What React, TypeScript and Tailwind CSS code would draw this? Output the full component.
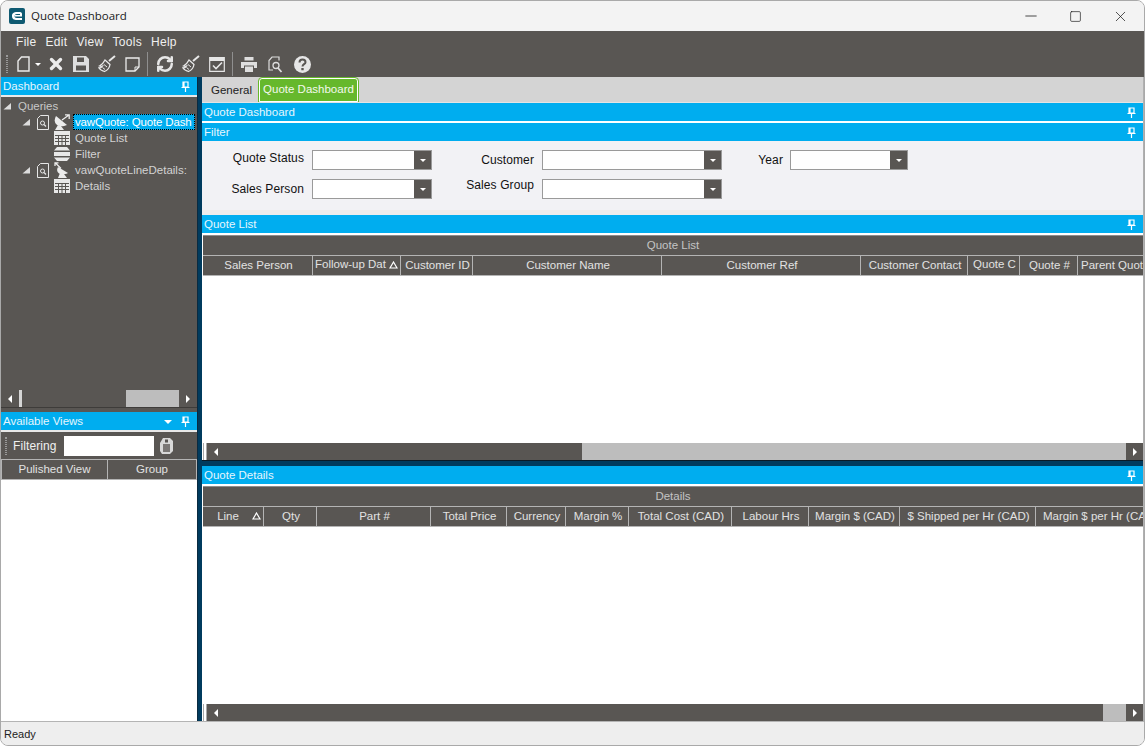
import { Minus, RefreshCw, Square, X } from "lucide-react";

const font = "[font-family:'Liberation_Sans',Arial,sans-serif]";

const quoteCols = [
  { label: "Sales Person", w: 110 },
  { label: "Follow-up Dat", w: 88, sort: true, up: true },
  { label: "Customer ID", w: 72 },
  { label: "Customer Name", w: 189 },
  { label: "Customer Ref", w: 199 },
  { label: "Customer Contact", w: 107 },
  { label: "Quote C", w: 52, up: true },
  { label: "Quote #", w: 58 },
  { label: "Parent Quot", w: 65, left: "pl-[3px]" },
];

const detailCols = [
  { label: "Line", w: 61, sort: true },
  { label: "Qty", w: 53 },
  { label: "Part #", w: 114 },
  { label: "Total Price", w: 76 },
  { label: "Currency", w: 59 },
  { label: "Margin %", w: 63 },
  { label: "Total Cost (CAD)", w: 103 },
  { label: "Labour Hrs", w: 77 },
  { label: "Margin $ (CAD)", w: 91 },
  { label: "$ Shipped per Hr (CAD)", w: 136 },
  { label: "Margin $ per Hr (CAD)", w: 108, left: "pl-[7px]" },
];

function Pin() {
  return (
    <svg width="9" height="11" viewBox="0 0 9 11" className="shrink-0">
      <path d="M2 1h5v5H2z M3 1v5" fill="none" stroke="#fff" strokeWidth="1.2" />
      <path d="M0.5 6.5h8M4.5 7v4" stroke="#fff" strokeWidth="1.2" />
    </svg>
  );
}

function BlueHeader({ title, dropdown }: { title: string; dropdown?: boolean }) {
  return (
    <div className="flex h-[18px] shrink-0 items-center bg-[#00adef] pl-[2px] pr-[7px] text-[11.5px] text-[#e6f6fd]">
      <span className="flex-1 truncate pt-px">{title}</span>
      {dropdown && <span className="mr-[9px] mt-[2px] h-0 w-0 border-x-[4px] border-t-[4px] border-x-transparent border-t-white" />}
      <Pin />
    </div>
  );
}

function LeftArrow() {
  return <span className="h-0 w-0 border-y-[4px] border-r-[4px] border-y-transparent border-r-white" />;
}

function RightArrow() {
  return <span className="h-0 w-0 border-y-[4px] border-l-[4px] border-y-transparent border-l-white" />;
}

function Combo({ width }: { width: string }) {
  return (
    <div className={`flex h-[20px] border border-[#9a9a9a] bg-white ${width}`}>
      <div className="flex-1" />
      <div className="flex w-[17px] items-center justify-center bg-[#595653]">
        <span className="h-0 w-0 border-x-[3px] border-t-[3px] border-x-transparent border-t-white" />
      </div>
    </div>
  );
}

function HeaderRow({ cols }: { cols: { label: string; w: number; sort?: boolean; up?: boolean; left?: string }[] }) {
  return (
    <div className="ml-px flex h-[21px] shrink-0 overflow-hidden border-y border-[#b4b4b4] bg-[#595653] text-[11.5px] text-[#e2e2e2]">
      {cols.map((c, i) => (
        <div
          key={c.label}
          style={{ width: c.w }}
          className={`relative flex shrink-0 whitespace-nowrap ${c.left ? c.left : "pl-[2px]"} ${i < cols.length - 1 ? "border-r border-[#b4b4b4]" : ""} ${c.left ? "justify-start" : c.sort && !c.up ? "justify-center pr-[12px]" : c.sort ? "justify-start" : "justify-center"} ${c.up ? "items-start leading-[17px]" : "items-center pt-px"}`}
        >
          {c.label}
          {c.sort && (
            <svg width="9" height="8" viewBox="0 0 9 8" className="absolute right-[2px] top-[5px]">
              <path d="M4.5 1 8 7H1z" fill="none" stroke="#fff" strokeWidth="1.2" />
            </svg>
          )}
        </div>
      ))}
    </div>
  );
}

function GridTitle({ title }: { title: string }) {
  return (
    <div className="ml-px flex h-[20px] shrink-0 items-center justify-center border-t border-[#8d8d8d] bg-[#595653] pt-px text-[11.5px] text-[#c4c4c4]">
      {title}
    </div>
  );
}

function HScroll({ thumbLeft, thumbWidth }: { thumbLeft: string; thumbWidth: string }) {
  return (
    <div className="ml-px flex h-[17px] shrink-0 items-stretch bg-[#595653]">
      <div className="w-[4px] border-x border-[#a8a8a8] bg-white" />
      <div className="flex w-[18px] items-center justify-center"><LeftArrow /></div>
      <div className={thumbLeft} />
      <div className={`bg-[#bdbdbd] ${thumbWidth}`} />
      <div className="flex w-[17px] items-center justify-center"><RightArrow /></div>
    </div>
  );
}

function GridIcon() {
  return (
    <svg width="16" height="14" viewBox="0 0 16 14" className="shrink-0">
      <path d="M0 0h16v14H0z" fill="#e8e8e8" />
      <path d="M1 4.5h14M1 7.5h14M1 10.5h14M4.5 4v10M8 4v10M11.5 4v10" stroke="#595653" strokeWidth="1" />
    </svg>
  );
}

function FilterIcon() {
  return (
    <svg width="16" height="14" viewBox="0 0 16 14" className="shrink-0">
      <path d="M3 0h10l3 3.500H0zM0 5h16v4H0zM0 10.500h16L13 14H3z" fill="#e8e8e8" />
    </svg>
  );
}

function DocSearchIcon() {
  return (
    <svg width="12" height="15" viewBox="0 0 12 15" className="shrink-0">
      <path d="M3.500 .5h8v14H.5V3.500z" fill="none" stroke="#e6e6e6" />
      <circle cx="5.500" cy="8" r="2" fill="none" stroke="#e6e6e6" />
      <path d="M7 9.500l2 2" stroke="#e6e6e6" strokeWidth="1.2" />
    </svg>
  );
}

function SatelliteIcon({ flip }: { flip?: boolean }) {
  return (
    <svg width="16" height="16" viewBox="0 0 16 16" className="shrink-0">
      {flip ? (
        <>
          <path d="M4 5C1 10 6 15 14 11z" fill="#ececec" />
          <path d="M6 11l-2 5h9l-3-4z" fill="#ececec" />
          <path d="M1 .5l6 6M1 4V.8h3.500" stroke="#ececec" strokeWidth="1.3" fill="none" />
        </>
      ) : (
        <>
          <path d="M2 2C-2 9 4 15 13 11z" fill="#ececec" />
          <path d="M4 11l-3 5h9l-3-4z" fill="#ececec" />
          <path d="M8 6l7-5M11 .8h4.200V5" stroke="#ececec" strokeWidth="1.3" fill="none" />
        </>
      )}
    </svg>
  );
}

function TreeArrow() {
  return (
    <svg width="9" height="8" viewBox="0 0 9 8" className="shrink-0">
      <path d="M8 1v6.500H.5z" fill="#dcdcdc" />
    </svg>
  );
}

function Broom() {
  return (
    <svg width="18" height="18" viewBox="0 0 18 18" className="shrink-0">
      <path d="M17 1l-6 5" stroke="#e8e8e8" strokeWidth="2" />
      <path d="M7 5l5 4.500c-.5 3-3 6-5.500 7C5 16 2 15 1 13c2 0 3-1 3.500-2-1 .5-2 .5-3 0C3.500 10 5.500 8 7 5z" fill="none" stroke="#e8e8e8" strokeWidth="1.3" />
      <path d="M6 9.500l3 2.500M4.500 12.500l2.500 2" stroke="#e8e8e8" />
    </svg>
  );
}

function Toolbar() {
  return (
    <div className="flex h-[26px] shrink-0 items-center bg-[#595653] pl-[5px]">
      <div className="h-[18px] w-[2px] border-x border-dotted border-[#999]" />
      <svg width="13" height="16" viewBox="0 0 13 16" className="ml-[9px] shrink-0">
        <path d="M4.500 1H12v14H1V5z" fill="none" stroke="#ececec" strokeWidth="1.4" />
      </svg>
      <span className="ml-[5px] h-0 w-0 border-x-[3px] border-t-[3px] border-x-transparent border-t-white" />
      <X size={18} strokeWidth={4.5} className="ml-[6px] shrink-0 text-[#ececec]" />
      <svg width="16" height="16" viewBox="0 0 16 16" className="ml-[8px] shrink-0">
        <path fillRule="evenodd" d="M0 0h13l3 3v13H0zM4 1.500V6h7V1.500zM3 9.500V14.500h10V9.500z" fill="#dedede" />
      </svg>
      <div className="ml-[9px]"><Broom /></div>
      <svg width="15" height="15" viewBox="0 0 15 15" className="ml-[9px] shrink-0">
        <path d="M1 1h13v9l-4 4H1z" fill="none" stroke="#ececec" strokeWidth="1.3" />
        <path d="M14 10h-4v4" fill="none" stroke="#ececec" />
      </svg>
      <div className="ml-[7px] h-[24px] w-px bg-[#8f8f8f]" />
      <RefreshCw size={18} strokeWidth={3.4} className="ml-[8px] shrink-0 text-[#e6e6e6]" />
      <div className="ml-[8px]"><Broom /></div>
      <svg width="16" height="15" viewBox="0 0 16 15" className="ml-[9px] shrink-0">
        <path d="M.7 .7h14.600v13.600H.7z" fill="none" stroke="#e6e6e6" strokeWidth="1.2" />
        <path d="M1 1h14v3H1z" fill="#e6e6e6" />
        <path d="M4 8.500l3 3 6-6" fill="none" stroke="#e6e6e6" strokeWidth="1.6" />
      </svg>
      <div className="ml-[7px] h-[24px] w-px bg-[#8f8f8f]" />
      <svg width="16" height="15" viewBox="0 0 16 15" className="ml-[8px] shrink-0">
        <path d="M3.500 0h9v3.500h-9zM0 5h16v6h-3V8.500H3V11H0zM4 9.500h8V15H4z" fill="#dedede" />
      </svg>
      <svg width="15" height="17" viewBox="0 0 15 17" className="ml-[11px] shrink-0">
        <path d="M11 4.500V1H4L1 4.500V14h4" fill="none" stroke="#dedede" strokeWidth="1.2" />
        <circle cx="8" cy="9.500" r="3" fill="none" stroke="#dedede" strokeWidth="1.3" />
        <path d="M10 12l3.500 4" stroke="#dedede" strokeWidth="1.8" />
      </svg>
      <svg width="17" height="17" viewBox="0 0 17 17" className="ml-[11px] shrink-0">
        <circle cx="8.500" cy="8.500" r="8.500" fill="#e6e6e6" />
        <path d="M5.500 6.500c0-2 1.300-3 3-3s3 1 3 2.700c0 2-3 2-3 4.300" fill="none" stroke="#595653" strokeWidth="2" />
        <path d="M7.300 12h2.400v2.200H7.300z" fill="#595653" />
      </svg>
    </div>
  );
}

function TreeRow({ indent, icon, children, selected }: { indent: string; icon: React.ReactNode; children: React.ReactNode; selected?: boolean }) {
  return (
    <div className={`flex h-[16px] items-center ${indent}`}>
      {icon}
      <span
        className={`ml-[3px] whitespace-nowrap border pl-px pr-[2px] text-[11.5px] leading-[14px] ${selected ? "border-dotted border-black bg-[#00adef] tracking-[-0.15px] text-white" : "border-transparent text-[#d2d2d2]"}`}
      >
        {children}
      </span>
    </div>
  );
}

export default function App() {
  return (
    <div className={`flex h-[746px] w-[1145px] flex-col overflow-hidden rounded-lg border border-[#a9a9a9] bg-[#f3f3f3] ${font}`}>
      {/* title bar */}
      <div className="flex h-[30px] shrink-0 items-center bg-[#f3f3f3] pl-[8px]">
        <div className="flex h-[16px] w-[16px] items-center justify-center rounded-[2px] bg-[#0f5a72]">
          <svg width="12" height="10" viewBox="0 0 12 10">
            <path d="M1 5C1 2 3 1 6 1h3c1.500 0 2 1 2 2v2.500H3.800V4H9V3H6C4 3 3.500 4 3.500 5S4 7 6 7h5v2H6C3 9 1 8 1 5z" fill="#fff" />
          </svg>
        </div>
        <span className="ml-[6px] flex-1 font-['Open_Sans'] text-[11.5px] text-[#1a1a1a]">Quote Dashboard</span>
        <Minus size={18} strokeWidth={1} className="mr-[29px] text-[#111]" />
        <Square size={13} strokeWidth={1.2} className="mr-[30px] text-[#111]" />
        <X size={17} strokeWidth={1} className="mr-[15px] text-[#111]" />
      </div>

      {/* menu and toolbar */}
      <div className="flex h-[20px] shrink-0 items-center gap-[9px] bg-[#595653] pl-[15px] pt-px text-[12px] tracking-[0.3px] text-[#f0f0f0]">
        <span>File</span>
        <span>Edit</span>
        <span>View</span>
        <span>Tools</span>
        <span>Help</span>
      </div>
      <Toolbar />

      <div className="flex min-h-0 flex-1">
        {/* left column */}
        <div className="flex w-[196px] shrink-0 flex-col bg-[#595653]">
          <BlueHeader title="Dashboard" />
          <div className="h-[2px] shrink-0 bg-[#e8e8e8]" />
          <div className="flex h-[310px] shrink-0 flex-col overflow-hidden pt-px">
            <div className="flex h-[16px] items-center pl-[2px]">
              <TreeArrow />
              <span className="ml-[6px] pt-px text-[11.5px] text-[#c8c8c8]">Queries</span>
            </div>
            <TreeRow
              indent="pl-[21px]"
              selected
              icon={
                <>
                  <TreeArrow />
                  <span className="ml-[6px]"><DocSearchIcon /></span>
                  <span className="ml-[5px]"><SatelliteIcon /></span>
                </>
              }
            >
              vawQuote: Quote Dash
            </TreeRow>
            <TreeRow indent="pl-[53px]" icon={<GridIcon />}>Quote List</TreeRow>
            <TreeRow indent="pl-[53px]" icon={<FilterIcon />}>Filter</TreeRow>
            <TreeRow
              indent="pl-[21px]"
              icon={
                <>
                  <TreeArrow />
                  <span className="ml-[6px]"><DocSearchIcon /></span>
                  <span className="ml-[5px]"><SatelliteIcon flip /></span>
                </>
              }
            >
              vawQuoteLineDetails:
            </TreeRow>
            <TreeRow indent="pl-[53px]" icon={<GridIcon />}>Details</TreeRow>
            <div className="flex-1" />
            <div className="flex h-[17px] shrink-0 items-stretch">
              <div className="flex w-[18px] items-center justify-center"><LeftArrow /></div>
              <div className="w-[3px] bg-[#d5d5d5]" />
              <div className="w-[104px]" />
              <div className="w-[53px] bg-[#bdbdbd]" />
              <div className="flex flex-1 items-center justify-center"><RightArrow /></div>
            </div>
          </div>
          <div className="h-[5px] shrink-0 border-t border-[#3e3c3a] bg-[#595653]" />
          <BlueHeader title="Available Views" dropdown />
          <div className="h-[2px] shrink-0 bg-[#e8e8e8]" />
          <div className="flex h-[27px] shrink-0 items-center pl-[4px]">
            <div className="h-[18px] w-[2px] border-x border-dotted border-[#999]" />
            <span className="ml-[6px] text-[12px] tracking-[0.1px] text-[#f0f0f0]">Filtering</span>
            <div className="ml-[7px] h-[20px] w-[90px] bg-white" />
            <svg width="13" height="16" viewBox="0 0 13 16" className="ml-[6px] shrink-0">
              <path d="M3 0h7l3 3v10l-3 3H2l-2-3V5z" fill="#d8d8d8" />
              <path d="M3 6v8h7V6z" fill="#7a7775" />
              <path d="M5 1.500h3v3H5z" fill="#595653" />
            </svg>
          </div>
          <div className="flex h-[21px] shrink-0 border-y border-l border-[#b4b4b4] text-[11.5px] text-[#e2e2e2]">
            <div className="flex w-[106px] items-center justify-center border-r border-[#b4b4b4] pt-px">Pulished View</div>
            <div className="flex flex-1 items-center justify-center border-r border-[#b4b4b4] pt-px">Group</div>
          </div>
          <div className="flex-1 bg-white" />
        </div>

        {/* splitter */}
        <div className="w-[5px] shrink-0 border-l border-[#0a2a40] bg-[#003b5e]" />

        {/* right column */}
        <div className="flex min-w-0 flex-1 flex-col border-r border-[#b0b0b0] bg-white">
          <div className="flex h-[25px] shrink-0 items-end bg-[#d4d4d4] pl-[2px]">
            <div className="flex h-[22px] w-[55px] items-center justify-center text-[11.5px] text-[#222]">General</div>
            <div className="flex h-[24px] w-[99px] items-center justify-center whitespace-nowrap rounded-t-[3px] border border-white bg-[#66b82c] pb-px text-[11.5px] text-[#f4f9ee] outline-1 outline-[#66b82c]">
              Quote Dashboard
            </div>
          </div>
          <div className="h-px shrink-0 bg-[#e4e4e4]" />
          <BlueHeader title="Quote Dashboard" />
          <div className="h-[2px] shrink-0" />
          <BlueHeader title="Filter" />
          <div className="h-[69px] shrink-0 bg-[#f2f2f5] pt-[9px]">
            <div className="grid grid-cols-[102px_128px_102px_188px_61px_125px] grid-rows-[20px_20px] gap-y-[9px] text-[12px] tracking-[0.1px] text-[#111]">
              <div className="text-right leading-[16px]">Quote Status</div>
              <div className="ml-[8px]"><Combo width="w-[120px]" /></div>
              <div className="pt-[2px] text-right leading-[16px]">Customer</div>
              <div className="ml-[8px]"><Combo width="w-[180px]" /></div>
              <div className="pt-[2px] text-right leading-[16px]">Year</div>
              <div className="ml-[7px]"><Combo width="w-[118px]" /></div>
              <div className="pt-[2px] text-right leading-[16px]">Sales Person</div>
              <div className="ml-[8px]"><Combo width="w-[120px]" /></div>
              <div className="text-right leading-[12px]">Sales Group</div>
              <div className="ml-[8px]"><Combo width="w-[180px]" /></div>
            </div>
          </div>
          <div className="h-[5px] shrink-0 bg-[#ececec]" />
          <BlueHeader title="Quote List" />
          <div className="h-[2px] shrink-0" />
          <GridTitle title="Quote List" />
          <HeaderRow cols={quoteCols} />
          <div className="h-[167px] shrink-0 bg-white" />
          <HScroll thumbLeft="w-[357px]" thumbWidth="w-[544px]" />
          <div className="h-[6px] shrink-0 border-t border-[#0a1a26] bg-[#003b5e]" />
          <BlueHeader title="Quote Details" />
          <div className="h-[2px] shrink-0" />
          <GridTitle title="Details" />
          <HeaderRow cols={detailCols} />
          <div className="min-h-0 flex-1 bg-white" />
          <HScroll thumbLeft="w-[878px]" thumbWidth="w-[23px]" />
        </div>
      </div>

      {/* status bar */}
      <div className="flex h-[24px] shrink-0 items-center border-t border-[#b4b4b4] bg-[#eeeeee] pl-[3px] pt-[2px] text-[11px] text-[#222]">
        Ready
      </div>
    </div>
  );
}
